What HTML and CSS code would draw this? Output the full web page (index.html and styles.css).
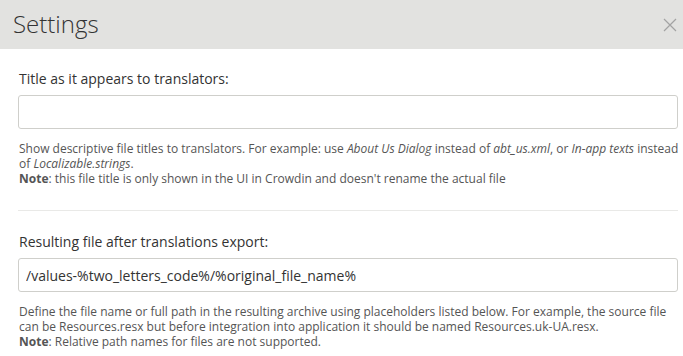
FILE: index.html
```html
<!DOCTYPE html>
<html lang="en">
<head>
    <meta charset="UTF-8">
    <title>Settings</title>
    <link rel="stylesheet" href="styles.css">
</head>
<body>
    <!-- Dialog header -->
    <div class="modal-header">
        <h3>Settings</h3>
        <span class="close">
            <svg width="14" height="14" viewBox="0 0 14 14"><path d="M1 1L13 13M13 1L1 13" stroke="#a3a3a3" stroke-width="1.2" fill="none"/></svg>
        </span>
    </div>

    <div class="modal-body">
        <!-- Title for translators -->
        <div class="field">
            <label for="title">Title as it appears to translators:</label>
            <input type="text" id="title">
            <p class="help">Show descriptive file titles to translators. For example: use <em>About Us Dialog</em> instead of <em>abt_us.xml</em>, or <em>In-app texts</em> instead of <em>Localizable.strings</em>.<br><b>Note</b>: this file title is only shown in the UI in Crowdin and doesn't rename the actual file</p>
        </div>

        <hr>

        <!-- Export path -->
        <div class="field">
            <label for="export">Resulting file after translations export:</label>
            <input type="text" id="export" value="/values-%two_letters_code%/%original_file_name%">
            <p class="help">Define the file name or full path in the resulting archive using placeholders listed below. For example, the source file can be Resources.resx but before integration into application it should be named Resources.uk-UA.resx.<br><b>Note</b>: Relative path names for files are not supported.</p>
        </div>
    </div>
</body>
</html>
```

FILE: styles.css
```css
* {
    margin: 0;
    padding: 0;
    box-sizing: border-box;
}

body {
    font-family: 'Open Sans', sans-serif;
    color: #333;
    background: #fff;
}

/* Header */
.modal-header {
    height: 49px;
    background: #e2e2e0;
    display: flex;
    align-items: center;
    justify-content: space-between;
    padding: 0 6px 0 13px;
}

.modal-header h3 {
    font-size: 24px;
    font-weight: 300;
    color: #333;
    line-height: 1;
    margin-top: -1px;
}

.close {
    display: flex;
    margin-top: 1px;
}

/* Body */
.modal-body {
    padding: 20px 5px 0 18px;
}

label {
    display: block;
    font-size: 14px;
    line-height: 20px;
    margin-bottom: 6px;
    padding-left: 1px;
}

input[type="text"] {
    display: block;
    width: 100%;
    height: 34px;
    border: 1px solid #cfcfcb;
    border-radius: 3px;
    padding: 0 7px;
    font-family: 'Open Sans', sans-serif;
    font-size: 14px;
    color: #333;
    outline: none;
}

.help {
    font-size: 12px;
    line-height: 15px;
    color: #555;
    margin-top: 12px;
    margin-right: -8px;
    padding-left: 1px;
}

hr {
    border: none;
    border-top: 1px solid #e9e9e7;
    margin: 24px 0 21px;
}
```
